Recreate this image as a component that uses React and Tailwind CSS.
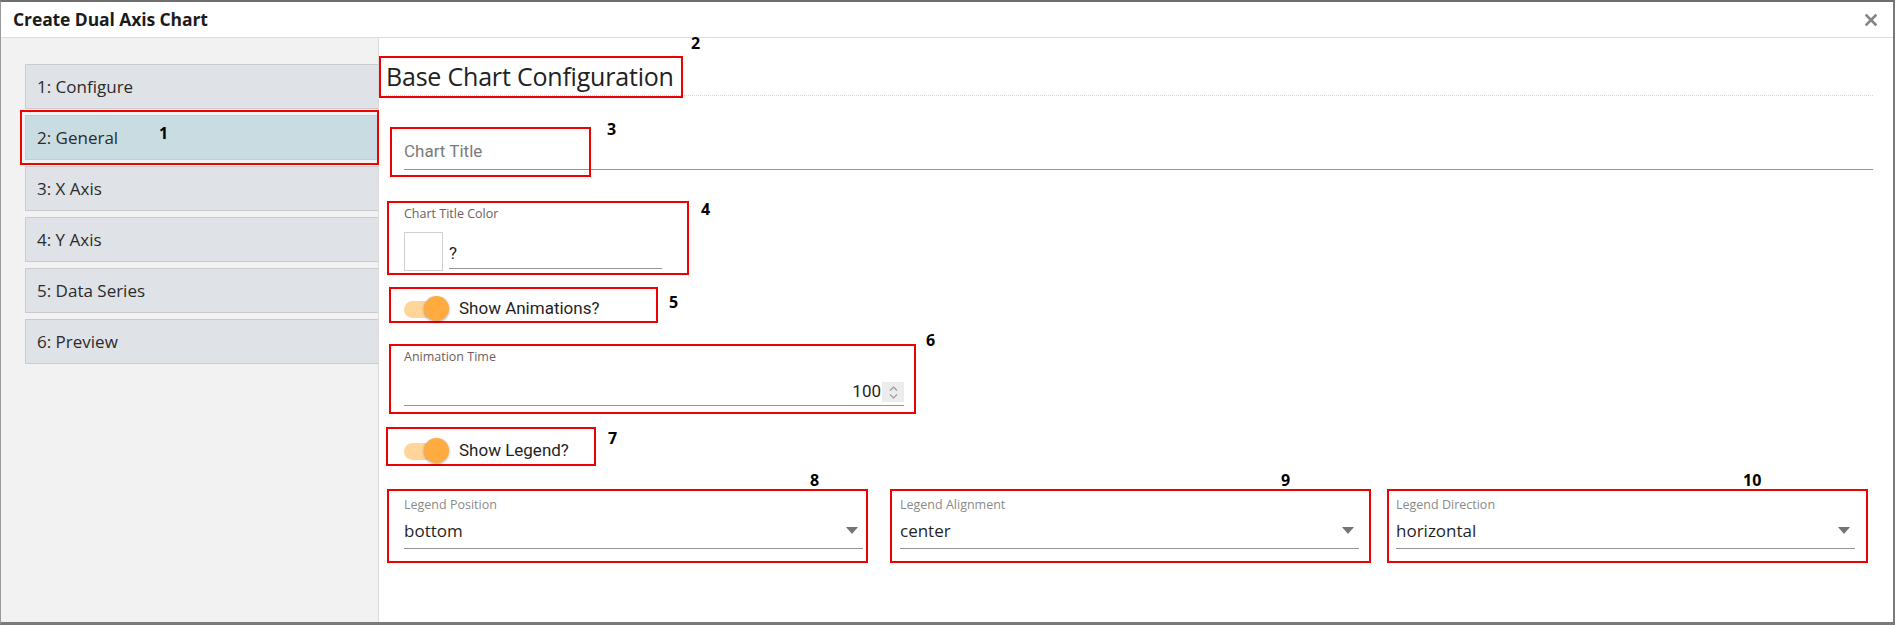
import React from 'react';

const Mark = ({ className }) => (
  <div className={`absolute border-2 border-[#f00000] pointer-events-none ${className}`}></div>
);

const Num = ({ children, className }) => (
  <div className={`absolute text-[16px] font-bold text-black leading-none font-['Open_Sans',sans-serif] ${className}`}>
    {children}
  </div>
);

const Toggle = () => (
  <div className="relative w-[45px] h-[26px] flex items-center">
    <div className="w-[42px] h-[17px] rounded-full bg-[#ffd59a]"></div>
    <div className="absolute right-0 top-0 w-[25px] h-[25px] rounded-full bg-[#ffab40] shadow-[0_1px_3px_rgba(0,0,0,0.35)]"></div>
  </div>
);

const Caret = () => (
  <svg width="12" height="7" viewBox="0 0 12 7" className="mr-[5px]">
    <path d="M0 0 L12 0 L6 7 Z" fill="#757575" />
  </svg>
);

const SelectField = ({ label, value, markLeft, num, numLeft }) => (
  <div className="relative">
    <Mark className={`${markLeft} -top-[8px] w-[481px] h-[74px]`} />
    <Num className={`${numLeft} -top-[25px]`}>{num}</Num>
    <div className="h-[16px] text-[12.5px] leading-[16px] text-[#8a8a8a]">{label}</div>
    <div className="h-[36px] flex items-center justify-between border-b border-[#949494]">
      <span className="text-[17px] text-[#1f1f1f]">{value}</span>
      <Caret />
    </div>
  </div>
);

const steps = ['1: Configure', '2: General', '3: X Axis', '4: Y Axis', '5: Data Series', '6: Preview'];

export default function App() {
  return (
    <div className="w-[1895px] h-[625px] flex flex-col bg-white border-t-2 border-r-2 border-b-[3px] border-l border-t-[#6f6f6f] border-r-[#7a7a7a] border-b-[#7a7a7a] border-l-[#9a9a9a] font-['Open_Sans',sans-serif] overflow-hidden">
      {/* Header */}
      <div className="h-[36px] shrink-0 flex items-center justify-between pl-[12px] pr-[16px] border-b border-[#dcdce0]">
        <span className="text-[17.5px] font-bold text-[#1b1b1b] tracking-[-0.1px]">Create Dual Axis Chart</span>
        <svg width="12" height="12" viewBox="0 0 12 12">
          <path d="M1.5 1.5 L10.5 10.5 M10.5 1.5 L1.5 10.5" stroke="#858585" strokeWidth="2.6" strokeLinecap="square" />
        </svg>
      </div>

      <div className="flex flex-1 min-h-0">
        {/* Sidebar */}
        <div className="w-[378px] shrink-0 bg-[#f2f2f2] border-r border-[#dadada] pt-[26px] pl-[24px]">
          {steps.map((s, i) => (
            <div key={s} className="relative mb-[6px]">
              {i === 1 && (
                <>
                  <Mark className="-left-[5px] -top-[5px] -right-[1px] -bottom-[5px]" />
                  <Num className="left-[134px] top-[10px]">1</Num>
                </>
              )}
              <div
                className={`h-[45px] flex items-center pl-[11px] text-[17px] text-[#2b2b2b] border border-[#cbcbcb] border-r-0 ${
                  i === 1 ? 'bg-[#c9dce1]' : 'bg-[#dfe2e6]'
                }`}
              >
                {s}
              </div>
            </div>
          ))}
        </div>

        {/* Main panel */}
        <div className="flex-1 pl-[7px] pr-[20px]">
          {/* Heading */}
          <div className="relative mt-[20px] h-[38px] flex items-center border-b border-dotted border-[#d6d6d6]">
            <Mark className="-left-[7px] -top-[2px] w-[304px] h-[42px]" />
            <Num className="left-[305px] -top-[23px]">2</Num>
            <span className="text-[25px] text-[#222] tracking-[-0.2px]">Base Chart Configuration</span>
          </div>

          <div className="pl-[18px]">
            {/* Chart title */}
            <div className="relative mt-[38px] h-[36px] flex items-center border-b border-[#949494] font-['Roboto',sans-serif]">
              <Mark className="-left-[14px] -top-[7px] w-[201px] h-[50px]" />
              <Num className="left-[203px] -top-[13px]">3</Num>
              <span className="text-[17px] text-[#7a7a7a]">Chart Title</span>
            </div>

            {/* Chart title color */}
            <div className="relative mt-[36px] w-[258px]">
              <Mark className="-left-[17px] -top-[5px] w-[302px] h-[74px]" />
              <Num className="left-[297px] -top-[5px]">4</Num>
              <div className="h-[16px] text-[12.5px] leading-[16px] text-[#6e6060]">Chart Title Color</div>
              <div className="mt-[10px] flex items-end">
                <div className="w-[39px] h-[39px] border border-[#cfcfcf] bg-white"></div>
                <div className="ml-[6px] w-[213px] h-[30px] mb-[2px] flex items-center border-b border-[#949494] text-[17px] text-[#1f1f1f] font-['Roboto',sans-serif]">
                  ?
                </div>
              </div>
            </div>

            {/* Show animations */}
            <div className="relative mt-[25px] h-[26px] flex items-center gap-[10px] w-fit font-['Roboto',sans-serif]">
              <Mark className="-left-[15px] -top-[9px] w-[269px] h-[36px]" />
              <Num className="left-[265px] -top-[2px]">5</Num>
              <Toggle />
              <span className="text-[17px] text-[#1f1f1f]">Show Animations?</span>
            </div>

            {/* Animation time */}
            <div className="relative mt-[27px] w-[500px]">
              <Mark className="-left-[15px] -top-[5px] w-[527px] h-[70px]" />
              <Num className="left-[522px] -top-[17px]">6</Num>
              <div className="h-[16px] text-[12.5px] leading-[16px] text-[#6e6060]">Animation Time</div>
              <div className="mt-[14px] h-[27px] flex items-center justify-end border-b border-[#949494] font-['Roboto',sans-serif]">
                <span className="text-[17px] text-[#1f1f1f] mr-[1px]">100</span>
                <div className="w-[22px] h-[20px] bg-[#ececec] flex flex-col items-center justify-center gap-[3px]">
                  <svg width="9" height="5" viewBox="0 0 9 5"><path d="M1 4.5 L4.5 1 L8 4.5" stroke="#9a9a9a" strokeWidth="1.2" fill="none" /></svg>
                  <svg width="9" height="5" viewBox="0 0 9 5"><path d="M1 0.5 L4.5 4 L8 0.5" stroke="#9a9a9a" strokeWidth="1.2" fill="none" /></svg>
                </div>
              </div>
            </div>

            {/* Show legend */}
            <div className="relative mt-[32px] h-[26px] flex items-center gap-[10px] w-fit font-['Roboto',sans-serif]">
              <Mark className="-left-[18px] -top-[11px] w-[210px] h-[39px]" />
              <Num className="left-[204px] -top-[8px]">7</Num>
              <Toggle />
              <span className="text-[17px] text-[#1f1f1f]">Show Legend?</span>
            </div>

            {/* Legend selects */}
            <div className="mt-[33px] grid grid-cols-[459px_459px_459px] gap-x-[37px]">
              <SelectField label="Legend Position" value="bottom" markLeft="-left-[17px]" num="8" numLeft="left-[406px]" />
              <SelectField label="Legend Alignment" value="center" markLeft="-left-[10px]" num="9" numLeft="left-[381px]" />
              <SelectField label="Legend Direction" value="horizontal" markLeft="-left-[9px]" num="10" numLeft="left-[347px]" />
            </div>
          </div>
        </div>
      </div>
    </div>
  );
}
